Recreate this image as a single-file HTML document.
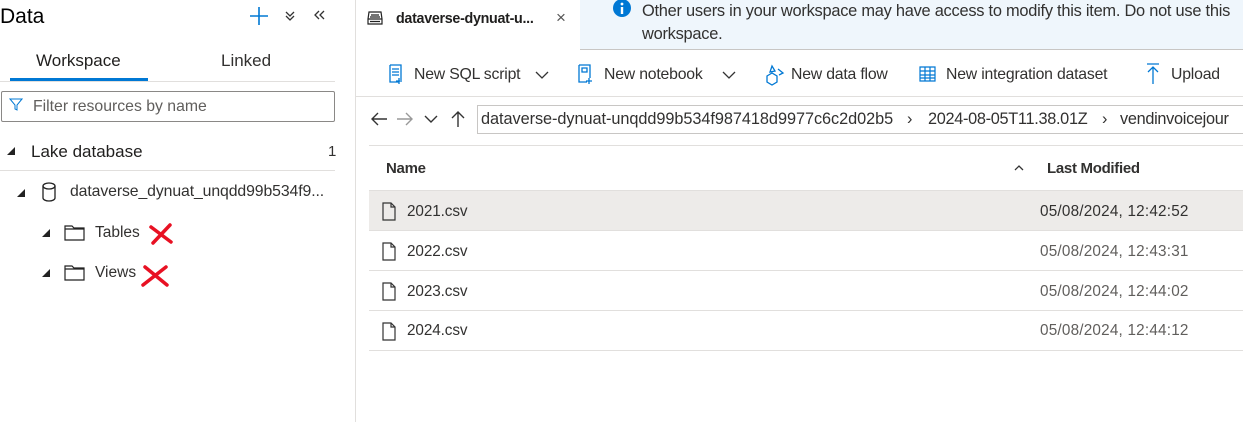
<!DOCTYPE html><html><head><style>
*{box-sizing:border-box;margin:0;padding:0}
body{width:1243px;height:422px;overflow:hidden;background:#fff;font-family:"Liberation Sans",sans-serif;color:#323130;position:relative;font-size:15px}
.a{position:absolute;white-space:nowrap}
.tb{font-size:15.8px;letter-spacing:-0.2px}
.bc{font-size:16.3px;letter-spacing:-0.3px}
.dt{font-size:15.3px;letter-spacing:0.2px}
</style></head><body>
<div class="a" style="left:0;top:5px;font-size:21px;color:#000">Data</div>
<svg class="a" style="left:249px;top:6px" width="20" height="20"><path d="M10 1V19M1 10H19" stroke="#0078d4" stroke-width="1.6"/></svg>
<svg class="a" style="left:284px;top:10px" width="12" height="12"><path d="M2 2L6 6L10 2M2 6L6 10L10 6" stroke="#333" fill="none" stroke-width="1.3"/></svg>
<svg class="a" style="left:313px;top:9px" width="13" height="12"><path d="M6 2L2 6L6 10M11 2L7 6L11 10" stroke="#333" fill="none" stroke-width="1.3"/></svg>
<div class="a" style="left:36px;top:51px;font-size:17px;color:#201f1e">Workspace</div>
<div class="a" style="left:221px;top:51px;font-size:17px;color:#323130">Linked</div>
<div class="a" style="left:10px;top:78px;width:138px;height:3px;background:#0078d4"></div>
<div class="a" style="left:0;top:81px;width:335px;height:1px;background:#e1dfdd"></div>
<div class="a" style="left:1px;top:91px;width:334px;height:31px;border:1px solid #8a8886;border-radius:2px"></div>
<svg class="a" style="left:9px;top:98px" width="14" height="14"><path d="M1 1H13L8 7V12L6 11V7Z" stroke="#0078d4" fill="none" stroke-width="1"/></svg>
<div class="a" style="left:33px;top:98px;font-size:15.8px;color:#605e5c">Filter resources by name</div>
<svg class="a" style="left:6px;top:146px" width="10" height="10"><path d="M9 1V9H1Z" fill="#222"/></svg>
<div class="a" style="left:31px;top:142px;font-size:17px;color:#201f1e">Lake database</div>
<div class="a" style="left:328px;top:143px;font-size:15px">1</div>
<div class="a" style="left:0;top:170px;width:335px;height:1px;background:#e1dfdd"></div>
<svg class="a" style="left:16px;top:188px" width="10" height="10"><path d="M9 1V9H1Z" fill="#222"/></svg>
<svg class="a" style="left:41px;top:182px" width="16" height="20"><ellipse cx="8" cy="4" rx="6" ry="3" fill="none" stroke="#222" stroke-width="1.3"/><path d="M2 4V16A6 3 0 0 0 14 16V4" fill="none" stroke="#222" stroke-width="1.3"/></svg>
<div class="a" style="left:70px;top:183px;font-size:15.8px;letter-spacing:-0.1px">dataverse_dynuat_unqdd99b534f9...</div>
<svg class="a" style="left:41px;top:228px" width="10" height="10"><path d="M9 1V9H1Z" fill="#222"/></svg>
<svg class="a" style="left:64px;top:224px" width="22" height="18"><path d="M1 2H8L10 4H20V16H1Z M1 5H20" fill="none" stroke="#222" stroke-width="1.2"/></svg>
<div class="a" style="left:95px;top:224px;font-size:15.5px">Tables</div>
<svg class="a" style="left:148px;top:222px" width="26" height="24"><path d="M3 5L23 20M22 3L5 21" stroke="#e81123" stroke-width="3.5" stroke-linecap="round"/></svg>
<svg class="a" style="left:41px;top:268px" width="10" height="10"><path d="M9 1V9H1Z" fill="#222"/></svg>
<svg class="a" style="left:64px;top:264px" width="22" height="18"><path d="M1 2H8L10 4H20V16H1Z M1 5H20" fill="none" stroke="#222" stroke-width="1.2"/></svg>
<div class="a" style="left:95px;top:264px;font-size:15.5px">Views</div>
<svg class="a" style="left:140px;top:263px" width="32" height="26"><path d="M5 4L27 22M26 4L3 22" stroke="#e81123" stroke-width="3.5" stroke-linecap="round"/></svg>
<div class="a" style="left:355px;top:0;width:1px;height:422px;background:#e1dfdd"></div>
<svg class="a" style="left:367px;top:11px" width="16" height="14"><path d="M2 1H14L15 8V13H1V8Z M1 8H15 M4 4H12 M3 6H13 M3 10.5H13" fill="none" stroke="#222" stroke-width="1.2"/></svg>
<div class="a" style="left:396px;top:11px;font-weight:bold;color:#201f1e;font-size:14.3px;letter-spacing:-0.3px">dataverse-dynuat-u...</div>
<div class="a" style="left:556px;top:8px;font-size:17px;color:#555">×</div>
<div class="a" style="left:580px;top:0;width:663px;height:50px;background:#eff6fc;border-bottom:1px solid #c8c6c4"></div>
<svg class="a" style="left:612px;top:0" width="20" height="18"><circle cx="10" cy="8" r="9" fill="#0078d4"/><rect x="8.8" y="7" width="2.4" height="7" fill="#fff"/><circle cx="10" cy="4" r="1.4" fill="#fff"/></svg>
<div class="a" style="left:642px;top:0px;line-height:23px;color:#323130;font-size:16.4px;letter-spacing:-0.25px">Other users in your workspace may have access to modify this item. Do not use this<br>workspace.</div>
<svg class="a" style="left:387px;top:64px" width="18" height="22"><path d="M3 1H14V16M3 1V18H12 M5 5H12M5 8H12M5 11H12" fill="none" stroke="#0078d4" stroke-width="1.3"/><path d="M12 14V20M9 17H15" stroke="#0078d4" stroke-width="1.3"/></svg>
<div class="a tb" style="left:414px;top:66px">New SQL script</div>
<svg class="a" style="left:535px;top:70px" width="14" height="10"><path d="M1 2L7 8L13 2" stroke="#333" fill="none" stroke-width="1.3"/></svg>
<svg class="a" style="left:577px;top:64px" width="18" height="22"><path d="M2 1H13V14M2 1V18H10 M5 4H10V8H5Z" fill="none" stroke="#0078d4" stroke-width="1.3"/><path d="M12 14V20M9 17H15" stroke="#0078d4" stroke-width="1.3"/></svg>
<div class="a tb" style="left:604px;top:66px">New notebook</div>
<svg class="a" style="left:722px;top:70px" width="14" height="10"><path d="M1 2L7 8L13 2" stroke="#333" fill="none" stroke-width="1.3"/></svg>
<svg class="a" style="left:764px;top:64px" width="22" height="22"><path d="M3 12L8 9L13 12V18L8 21L3 18Z M8 2L11 7L6 8Z M14 5L19 9L15 11" fill="none" stroke="#0078d4" stroke-width="1.3"/></svg>
<div class="a tb" style="left:791px;top:66px">New data flow</div>
<svg class="a" style="left:919px;top:65px" width="20" height="20"><path d="M1 2H16V16H1Z M1 6H16M1 10H16M1 13H16M6 2V16M11 2V16" fill="none" stroke="#0078d4" stroke-width="1.2"/></svg>
<div class="a tb" style="left:946px;top:66px">New integration dataset</div>
<svg class="a" style="left:1145px;top:63px" width="16" height="22"><path d="M2 1H14M8 4V21M3 9L8 4L13 9" fill="none" stroke="#0078d4" stroke-width="1.3"/></svg>
<div class="a tb" style="left:1171px;top:66px">Upload</div>
<div class="a" style="left:356px;top:96px;width:887px;height:1px;background:#e1dfdd"></div>
<svg class="a" style="left:370px;top:110px" width="100" height="18"><path d="M17 9H2M8 3L2 9L8 15" fill="none" stroke="#333" stroke-width="1.4"/><path d="M27 9H42M36 3L42 9L36 15" fill="none" stroke="#999" stroke-width="1.4"/><path d="M55 6L61 12L67 6" fill="none" stroke="#333" stroke-width="1.4"/><path d="M88 17V2M82 8L88 2L94 8" fill="none" stroke="#333" stroke-width="1.4"/></svg>
<div class="a" style="left:477px;top:105px;width:780px;height:29px;border:1px solid #c8c6c4"></div>
<div class="a bc" style="left:481px;top:110px;letter-spacing:-0.05px">dataverse-dynuat-unqdd99b534f987418d9977c6c2d02b5</div>
<div class="a bc" style="left:907px;top:110px">&#8250;</div>
<div class="a bc" style="left:928px;top:110px">2024-08-05T11.38.01Z</div>
<div class="a bc" style="left:1102px;top:110px">&#8250;</div>
<div class="a bc" style="left:1120px;top:110px">vendinvoicejour</div>
<div class="a" style="left:369px;top:145px;width:874px;height:1px;background:#e1dfdd"></div>
<div class="a" style="left:386px;top:160px;font-weight:bold;color:#323130;font-size:15px;letter-spacing:-0.3px">Name</div>
<svg class="a" style="left:1013px;top:164px" width="12" height="8"><path d="M2 6L6 2L10 6" stroke="#333" fill="none" stroke-width="1.3"/></svg>
<div class="a" style="left:1047px;top:160px;font-weight:bold;font-size:15px;letter-spacing:-0.3px">Last Modified</div>
<div class="a" style="left:369px;top:190px;width:874px;height:1px;background:#e1dfdd"></div>
<div class="a" style="left:369px;top:191px;width:874px;height:39px;background:#edebe9"></div>
<div class="a" style="left:369px;top:230px;width:874px;height:1px;background:#e1dfdd"></div>
<div class="a" style="left:369px;top:270px;width:874px;height:1px;background:#e1dfdd"></div>
<div class="a" style="left:369px;top:310px;width:874px;height:1px;background:#e1dfdd"></div>
<div class="a" style="left:369px;top:350px;width:874px;height:1px;background:#e1dfdd"></div>
<svg class="a" style="left:381px;top:202px" width="16" height="140"><g fill="none" stroke="#333" stroke-width="1.2"><path d="M2 1H10L14 5V18H2Z M10 1V5H14"/><path d="M2 41H10L14 45V58H2Z M10 41V45H14"/><path d="M2 81H10L14 85V98H2Z M10 81V85H14"/><path d="M2 121H10L14 125V138H2Z M10 121V125H14"/></g></svg>
<div class="a dt" style="left:407px;top:203px;letter-spacing:-0.1px">2021.csv</div>
<div class="a dt" style="left:407px;top:243px;letter-spacing:-0.1px">2022.csv</div>
<div class="a dt" style="left:407px;top:283px;letter-spacing:-0.1px">2023.csv</div>
<div class="a dt" style="left:407px;top:322px;letter-spacing:-0.1px">2024.csv</div>
<div class="a dt" style="left:1040px;top:203px;color:#323130">05/08/2024, 12:42:52</div>
<div class="a dt" style="left:1040px;top:243px;color:#605e5c">05/08/2024, 12:43:31</div>
<div class="a dt" style="left:1040px;top:283px;color:#605e5c">05/08/2024, 12:44:02</div>
<div class="a dt" style="left:1040px;top:322px;color:#605e5c">05/08/2024, 12:44:12</div>
</body></html>
